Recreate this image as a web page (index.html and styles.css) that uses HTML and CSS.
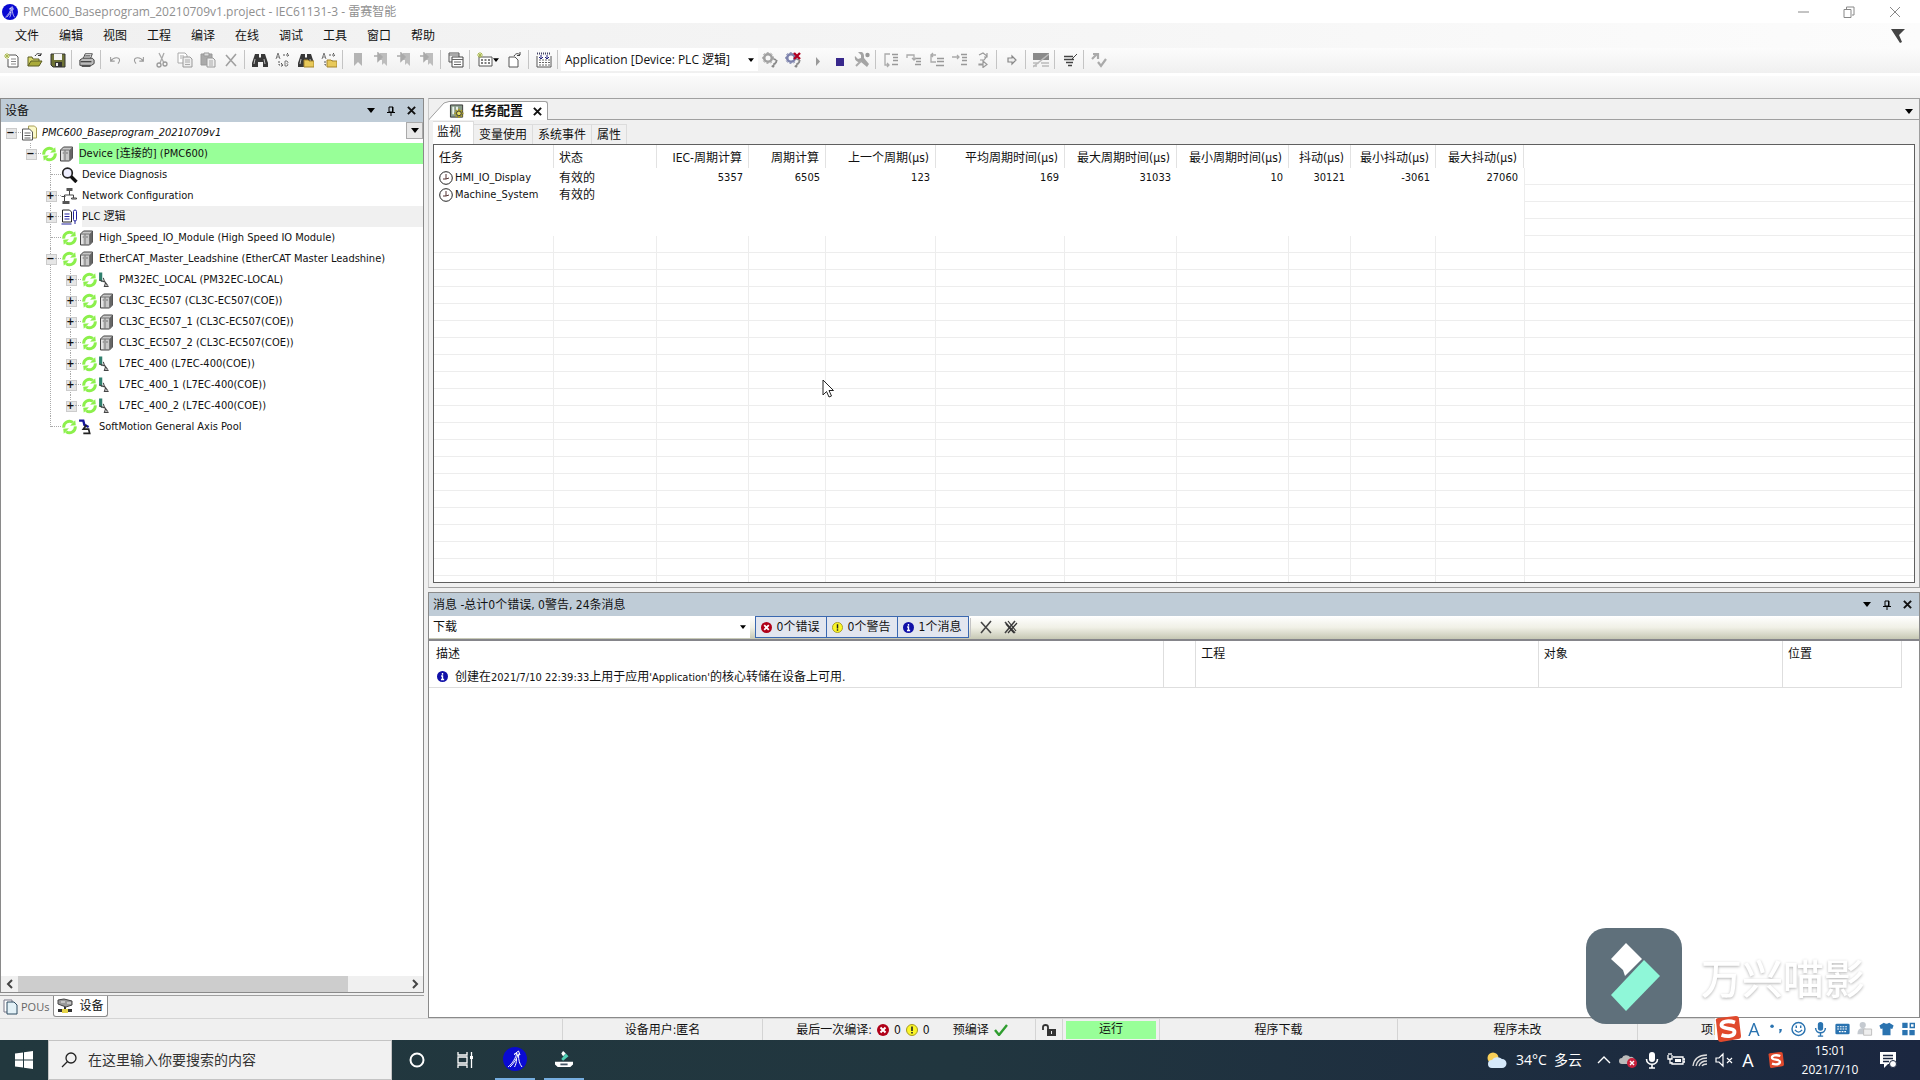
FILE: index.html
```html
<!DOCTYPE html>
<html lang="zh-CN">
<head>
  <meta charset="utf-8">
  <title>PMC600_Baseprogram_20210709v1.project - IEC61131-3 - 雷赛智能</title>
  <link rel="stylesheet" href="styles.css">
</head>
<body>
  <!-- shared icons -->
  <svg class="sprite" aria-hidden="true">
    <symbol id="i-logo" viewBox="0 0 24 24"><circle cx="12" cy="12" r="12" fill="#0a0ad2"/><path d="M5 20C10 16 12.500 11 14 6l-3 1.500L15.500 4 17 8l-2-1c-1 5-4 9-8 13M15.500 8c0 5 1 9 3.500 12M13.500 12c0 4-1 6-2 8" fill="none" stroke="#fff" stroke-width="1"/></symbol>
    <symbol id="i-down" viewBox="0 0 8 5"><path d="M0 0h8L4 5z"/></symbol>
    <symbol id="i-pin" viewBox="0 0 10 12"><path d="M3 2h4v5H3zM6.500 2v5M1 7.500h8M5 8v3" fill="none" stroke="#000" stroke-width="1"/></symbol>
    <symbol id="i-x" viewBox="0 0 10 10"><path d="M1 1l8 8M9 1L1 9" fill="none" stroke="currentColor" stroke-width="2.200"/></symbol>
    <symbol id="i-err" viewBox="0 0 12 12"><circle cx="6" cy="6" r="6" fill="#b00018"/><path d="M3.500 3.500l5 5M8.500 3.500l-5 5" stroke="#fff" stroke-width="2"/></symbol>
    <symbol id="i-warn" viewBox="0 0 12 12"><circle cx="6" cy="6" r="5.500" fill="#fbf628" stroke="#a59a22"/><path d="M6 2.500v4.500M6 8v1.600" stroke="#222" stroke-width="1.600"/></symbol>
    <symbol id="i-info" viewBox="0 0 12 12"><circle cx="6" cy="6" r="6" fill="#1010a8"/><path d="M6 2.200v1.800M4.500 5.500H6v3.700M4.300 9.300h3.500" fill="none" stroke="#fff" stroke-width="1.500"/></symbol>
    <symbol id="i-sync" viewBox="0 0 14 14"><path d="M2 7.500A5 5 0 0 1 10 3M12 6.500A5 5 0 0 1 4 11" fill="none" stroke="#8cf04c" stroke-width="2.600"/><path d="M7.500 6l5-.5L12 1zM6.500 8l-5 .5L2 13z" fill="#8cf04c"/></symbol>
    <symbol id="i-dev" viewBox="0 0 14 16"><path d="M1 4l3-3h9v11l-3 3H1z" fill="#c8c8c8" stroke="#444"/><path d="M10 4l3-3v11l-3 3z" fill="#666"/><path d="M1 4h9v11M5.500 4v11M2.500 7h2M6.500 7h2" fill="none" stroke="#777"/><path d="M2 5h1v9H2z" fill="#fff"/></symbol>
    <symbol id="i-drive" viewBox="0 0 16 14"><path d="M1 0h3v9l-3-2z" fill="#2f7f6d"/><path d="M1 7l6 2M5 5l1 3 3 4M7 10l-1 3h4" fill="none" stroke="#444"/></symbol>
    <symbol id="i-axis" viewBox="0 0 16 14"><path d="M1 1h4l1 4 4 2" fill="none" stroke="#15159a" stroke-width="2.200"/><path d="M8 5L5 9h5l1 4H5" fill="none" stroke="#222" stroke-width="1.600"/></symbol>
    <symbol id="i-diag" viewBox="0 0 16 16"><circle cx="6" cy="6" r="4.800" fill="#eef" stroke="#222" stroke-width="1.700"/><path d="M9.500 9.500l5.500 5.500" stroke="#111" stroke-width="3.400"/></symbol>
    <symbol id="i-net" viewBox="0 0 16 16"><path d="M5 0h6v3H5zM1 13h7v3H1z" fill="#555"/><path d="M8 3v4M3 13V7h9v3M0 8.500h4M10 10h5v1h-5z" fill="none" stroke="#444"/></symbol>
    <symbol id="i-plc" viewBox="0 0 16 16"><path d="M1 1h7l2 2v10H1z" fill="#fff" stroke="#222"/><path d="M3 5h5M3 7.500h5M3 10h5M0 15h10" stroke="#22229c" stroke-width="1.200"/><rect x="12" y="1" width="3" height="11" rx="1.500" fill="#fff" stroke="#22229c"/><path d="M13.500 12v3" stroke="#22229c"/></symbol>
    <symbol id="i-proj" viewBox="0 0 16 16"><path d="M7 1h6l2 2v10H7z" fill="#fbf9c8" stroke="#a89f58"/><path d="M1 4h7l3 3v8H1z" fill="#fff" stroke="#555"/><path d="M3 8h6M3 10.500h6M3 13h6" stroke="#666"/></symbol>
    <symbol id="i-clock" viewBox="0 0 14 14"><circle cx="7" cy="7" r="6.300" fill="#fff" stroke="#222"/><path d="M7 3v5M7 8l3-1M4 8h3" fill="none" stroke="#533"/></symbol>
    <symbol id="i-new" viewBox="0 0 16 16"><path d="M5 3h7l2 2v10H4V7" fill="#fff" stroke="#555"/><path d="M7 7h5M7 9.500h5M7 12h5" stroke="#888"/><path d="M0 4h6M3 1v6M1 2l4 4M5 2L1 6" stroke="#a9b84c"/></symbol>
    <symbol id="i-open" viewBox="0 0 16 16"><path d="M1 14V5h4l1 2h6v2" fill="#d8d86a" stroke="#5a5c22"/><path d="M1 14l3-5h11l-3 5z" fill="#a9aa3a" stroke="#5a5c22"/><path d="M8 4c2-3 4-3 6-1V1M14 3.500h-3" fill="none" stroke="#333"/></symbol>
    <symbol id="i-save" viewBox="0 0 16 16"><path d="M1 2h14v13H3l-2-2z" fill="#6e7236" stroke="#333"/><path d="M4 2h8v6H4z" fill="#f4f4f4"/><path d="M5 10h7v5H5z" fill="#333"/><path d="M6 11h2v3H6z" fill="#eee"/></symbol>
    <symbol id="i-print" viewBox="0 0 18 16"><path d="M5 6l2-5h8l-2 5" fill="#fff" stroke="#333"/><path d="M7 3h6M6.500 4.500h6" stroke="#666"/><path d="M1 8l3-2h11l2 2v4l-3 2H1z" fill="#bbb" stroke="#333"/><path d="M2 10h12M3 15h10" stroke="#222" stroke-width="1.200"/></symbol>
    <symbol id="i-undo" viewBox="0 0 16 16"><path d="M2 5v5h5M2 10c4-6 11-5 11-1 0 2-1 3-2 4" fill="none" stroke="#999" stroke-width="1.300"/></symbol>
    <symbol id="i-cut" viewBox="0 0 16 16"><path d="M5 1l5 10M10 1L6 11" stroke="#aaa" stroke-width="1.300"/><circle cx="5" cy="13" r="2" fill="none" stroke="#999" stroke-width="1.300"/><circle cx="11" cy="12" r="2" fill="none" stroke="#999" stroke-width="1.300"/></symbol>
    <symbol id="i-copy" viewBox="0 0 16 16"><path d="M1 1h7l2 2v8H1z" fill="#fff" stroke="#aaa"/><path d="M6 5h7l2 2v8H6z" fill="#eee" stroke="#999"/><path d="M3 4h4M3 6h2M8 8h5M8 10h5M8 12.500h5" stroke="#aaa"/></symbol>
    <symbol id="i-paste" viewBox="0 0 16 16"><path d="M1 2h11v11H1z" fill="#aaa" stroke="#999"/><path d="M4 1h5v3H4z" fill="#ddd" stroke="#999"/><path d="M7 6h6l2 2v7H7z" fill="#eee" stroke="#999"/><path d="M9 9h4M9 11h4M9 13h4" stroke="#aaa"/></symbol>
    <symbol id="i-del" viewBox="0 0 16 16"><path d="M3 3l10 11M13 2L3 14" stroke="currentColor" stroke-width="1.600"/></symbol>
    <symbol id="i-find" viewBox="0 0 16 16"><path d="M3 2h4v3l1 1 1-1V2h4l3 9v4h-5v-5H6v5H0v-4z" fill="#383838"/><path d="M3 7l-1 5M12 7l1 5" stroke="#bbb"/></symbol>
    <symbol id="i-repl" viewBox="0 0 16 16"><path d="M1 7l2-6 2 6M2 5h2M10 9v5h2q2-1 0-2.500 2-1 0-2.500z" fill="none" stroke="#777"/><path d="M8 3h6M12 1l2 2-2 2M4 9v4h4M6 11l2 2-2 2" fill="none" stroke="#555" stroke-dasharray="2 1"/></symbol>
    <symbol id="i-fold" viewBox="0 0 16 16"><path d="M6 8h4l1 1h5v6H6z" fill="#e8c95a" stroke="#a5852c"/></symbol>
    <symbol id="i-mark" viewBox="0 0 16 16"><path d="M4 1h8v13l-4-4-4 4z" fill="#b4b4b4"/></symbol>
    <symbol id="i-markn" viewBox="0 0 16 16"><path d="M7 1h7v13l-3-3-2 2V8H7z" fill="#bdbdbd"/><path d="M1 4h6M5 1l4 4-4 4z" fill="#aaa" stroke="#aaa" stroke-width="1.500"/></symbol>
    <symbol id="i-wins" viewBox="0 0 16 16"><path d="M1 1h10v9H1z" fill="#eee" stroke="#555"/><path d="M4 5h11v10H4z" fill="#fff" stroke="#444"/><path d="M1 3h10M4 7.500h11M6 10h7M6 12.500h7" stroke="#666"/></symbol>
    <symbol id="i-grid" viewBox="0 0 16 16"><path d="M2 5h13v9H2z" fill="#fff" stroke="#555"/><path d="M4 8h9M4 11h9" stroke="#555" stroke-width="1.500" stroke-dasharray="2 1.500"/><path d="M0 3h6M3 0v6M1 1l4 4M5 1L1 5" stroke="#a9b84c"/></symbol>
    <symbol id="i-page" viewBox="0 0 16 16"><path d="M2 5h6l3 3v7H2z" fill="#fff" stroke="#555"/><path d="M7 4c2-3 4-3 6-1V0M13 3.500h-3" fill="none" stroke="#444"/></symbol>
    <symbol id="i-build" viewBox="0 0 16 16"><path d="M1 4v11h14V4" fill="#fff" stroke="#555"/><path d="M3 8h11M3 10.500h11M3 13h11" stroke="#666" stroke-dasharray="2 1"/><path d="M1 1.500h14" stroke="#446" stroke-width="2" stroke-dasharray="1 1"/><path d="M5 3v4M3 5l2 2 2-2M11 3v4M9 5l2 2 2-2" fill="none" stroke="#22227c"/></symbol>
    <symbol id="i-gear" viewBox="0 0 16 16"><circle cx="6" cy="6" r="3.800" fill="none" stroke="currentColor" stroke-width="2.600"/><circle cx="6" cy="6" r="5.500" fill="none" stroke="currentColor" stroke-dasharray="2 2"/><path d="M12 7c3 1 3 4 0 5l-2 3M15 8l-4 7" fill="none" stroke="#888" stroke-width="1.800" stroke-dasharray="2 1"/></symbol>
    <symbol id="i-wrench" viewBox="0 0 16 16"><path d="M1 4l3 3 3-1V3L4 0c4-1 6 1 6 4v2l5 6-2 3-6-5C3 11 0 8 1 4z" fill="#a4a4a4"/><path d="M7 9l-5 5" stroke="#aaa" stroke-width="2"/><circle cx="13.500" cy="3" r="2.200" fill="#999"/></symbol>
    <symbol id="i-step" viewBox="0 0 16 16"><path d="M9 2.500h6M10 5.500h5M10 8.500h5M9 12.500h6" stroke="#999" stroke-width="1.400"/><path d="M7 2H2v11h4M4 11l2 2-2 2" fill="none" stroke="#aaa" stroke-width="1.300"/></symbol>
    <symbol id="i-over" viewBox="0 0 16 16"><path d="M9 6.500h6M10 9.500h5M9 12.500h6" stroke="#999" stroke-width="1.400"/><path d="M1 6V3h7v5M6 6l2 2 2-2" fill="none" stroke="#aaa" stroke-width="1.300"/></symbol>
    <symbol id="i-out" viewBox="0 0 16 16"><path d="M8 6.500h7M8 9.500h7M7 13.500h8" stroke="#999" stroke-width="1.400"/><path d="M7 10H2V3h5M4 1L2 3l2 2" fill="none" stroke="#aaa" stroke-width="1.300"/></symbol>
    <symbol id="i-to" viewBox="0 0 16 16"><path d="M9 2.500h6M10 5.500h5M10 8.500h5M9 12.500h6" stroke="#999" stroke-width="1.400"/><path d="M0 5h7M5 3l2 2-2 2" fill="none" stroke="#aaa" stroke-width="1.300"/></symbol>
    <symbol id="i-loop" viewBox="0 0 16 16"><path d="M4 3l4-2 4 3-3 4H5M12 1v4H9M4 12h4v-3l4 3.500-4 3V13H4z" fill="none" stroke="#999" stroke-width="1.200"/></symbol>
    <symbol id="i-next" viewBox="0 0 16 16"><path d="M4 6h4V4l4 4-4 4v-2H4z" fill="#eee" stroke="#888" stroke-width="1.200"/></symbol>
    <symbol id="i-flow" viewBox="0 0 16 16"><path d="M0 1h16v7H0z" fill="#8a8a8a"/><path d="M0 15L16 2M0 11h6M8 11h8M9 14h7M0 14h4" stroke="#bbb" stroke-width="1.500"/></symbol>
    <symbol id="i-force" viewBox="0 0 16 16"><path d="M2 4.500h9M2 7.500h10M4 10.500h7M6 13.500h4" stroke="#444" stroke-width="1.400"/><path d="M10 7l5-5" stroke="#444"/></symbol>
    <symbol id="i-tick" viewBox="0 0 16 16"><path d="M1 7l5-5M2 2h5v5" fill="none" stroke="#aaa" stroke-width="2.200"/><path d="M7 10l3 4 5-7" fill="none" stroke="#aaa" stroke-width="2.200"/></symbol>
    <symbol id="i-task" viewBox="0 0 16 16"><path d="M1 1h13v13H1z" fill="#8a9d8a" stroke="#333"/><path d="M3 3h2v8H3zM7 3h2v4H7z" fill="#eef4ee"/><path d="M10 5v10M5 10h10M6.500 6.500l7 7M13.500 6.500l-7 7" stroke="#a89c2c" stroke-width="2"/><circle cx="10" cy="10" r="2.500" fill="#e5dc60" stroke="#333"/></symbol>
    <symbol id="i-s" viewBox="0 0 26 26"><path d="M1 5Q0 3 3 2l18-2q3 0 3 3l2 17q0 3-3 3L6 26q-3 0-3-3z" fill="#e0492c"/><path d="M20 6.500C13 4 6 5.500 6.500 9.500s13 2 13 6.500-7 5-13 3" fill="none" stroke="#fff" stroke-width="3.800"/></symbol>
    <symbol id="i-mic" viewBox="0 0 14 18"><rect x="4" y="1" width="6" height="10" rx="3" fill="currentColor"/><path d="M1.500 8c0 7 11 7 11 0M7 13v4M4 17h6" fill="none" stroke="currentColor" stroke-width="1.600"/></symbol>
  </svg>

  <header class="titlebar">
    <svg class="app-logo"><use href="#i-logo"/></svg>
    <h1>PMC600_Baseprogram_20210709v1.project - IEC61131-3 - 雷赛智能</h1>
    <button aria-label="最小化"><svg viewBox="0 0 12 12"><path d="M1 6h11"/></svg></button>
    <button aria-label="还原"><svg viewBox="0 0 12 12"><path d="M1 3.500h7v8H1zM3.500 3V1h7.500v8H9"/></svg></button>
    <button aria-label="关闭"><svg viewBox="0 0 12 12"><path d="M1 1l10 10M11 1L1 11"/></svg></button>
  </header>

  <nav class="menubar">
    <button>文件</button><button>编辑</button><button>视图</button><button>工程</button><button>编译</button><button>在线</button><button>调试</button><button>工具</button><button>窗口</button><button>帮助</button>
    <button class="filter" aria-label="过滤"><svg viewBox="0 0 14 14"><path d="M0 0h14L8 6l3 7-2 1z" fill="#444"/></svg></button>
  </nav>

  <div class="toolbar">
    <button aria-label="新建"><svg><use href="#i-new"/></svg></button>
    <button aria-label="打开"><svg><use href="#i-open"/></svg></button>
    <button aria-label="保存"><svg><use href="#i-save"/></svg></button>
    <span class="sep"></span>
    <button aria-label="打印"><svg><use href="#i-print"/></svg></button>
    <span class="sep"></span>
    <button aria-label="撤销"><svg class="small"><use href="#i-undo"/></svg></button>
    <button aria-label="重做"><svg class="small mirror"><use href="#i-undo"/></svg></button>
    <button aria-label="剪切"><svg><use href="#i-cut"/></svg></button>
    <button aria-label="复制"><svg><use href="#i-copy"/></svg></button>
    <button aria-label="粘贴"><svg><use href="#i-paste"/></svg></button>
    <button class="dim" aria-label="删除"><svg><use href="#i-del"/></svg></button>
    <span class="sep"></span>
    <button aria-label="查找"><svg><use href="#i-find"/></svg></button>
    <button aria-label="替换"><svg><use href="#i-repl"/></svg></button>
    <button aria-label="在工程中查找"><svg><use href="#i-find"/><use href="#i-fold"/></svg></button>
    <button aria-label="在工程中替换"><svg><use href="#i-repl"/><use href="#i-fold"/></svg></button>
    <span class="sep"></span>
    <button aria-label="书签"><svg><use href="#i-mark"/></svg></button>
    <button aria-label="上一书签"><svg><use href="#i-markn"/></svg></button>
    <button aria-label="下一书签"><svg><use href="#i-markn"/></svg></button>
    <button aria-label="清除书签"><svg><use href="#i-markn"/></svg></button>
    <span class="sep"></span>
    <button aria-label="窗口"><svg><use href="#i-wins"/></svg></button>
    <span class="sep"></span>
    <button class="wide" aria-label="添加对象"><svg><use href="#i-grid"/></svg><svg class="caret"><use href="#i-down"/></svg></button>
    <button aria-label="新页"><svg><use href="#i-page"/></svg></button>
    <span class="sep"></span>
    <button aria-label="编译"><svg><use href="#i-build"/></svg></button>
    <span class="sep"></span>
    <span class="combo app-combo">
      <select aria-label="应用"><option>Application [Device: PLC 逻辑]</option></select>
      <svg class="caret"><use href="#i-down"/></svg>
    </span>
    <button class="dim" aria-label="登录"><svg><use href="#i-gear"/></svg></button>
    <button class="online" aria-label="退出"><svg viewBox="0 0 16 16"><use href="#i-gear"/><path d="M9 1l6 6M15 1L9 7" stroke="#b00020" stroke-width="2.400"/></svg></button>
    <button aria-label="启动"><svg viewBox="0 0 16 16"><path d="M8 5v9l4-4.500z" fill="#999"/></svg></button>
    <button aria-label="停止"><svg viewBox="0 0 16 16"><path d="M5 6h8v8H5z" fill="#38288c"/></svg></button>
    <button aria-label="设置"><svg><use href="#i-wrench"/></svg></button>
    <span class="sep"></span>
    <button aria-label="跳入"><svg><use href="#i-step"/></svg></button>
    <button aria-label="跳过"><svg><use href="#i-over"/></svg></button>
    <button aria-label="跳出"><svg><use href="#i-out"/></svg></button>
    <button aria-label="运行到光标"><svg><use href="#i-to"/></svg></button>
    <button aria-label="设置下一语句"><svg><use href="#i-loop"/></svg></button>
    <span class="sep"></span>
    <button aria-label="显示下一语句"><svg><use href="#i-next"/></svg></button>
    <span class="sep"></span>
    <button aria-label="流控制"><svg><use href="#i-flow"/></svg></button>
    <span class="sep"></span>
    <button aria-label="强制"><svg><use href="#i-force"/></svg></button>
    <span class="sep"></span>
    <button aria-label="检查"><svg><use href="#i-tick"/></svg></button>
  </div>
  <div class="toolbar-rest"></div>

  <main class="workspace">
    <aside class="side">
      <section class="panel tree-panel">
        <div class="panel-head">
          <h2>设备</h2>
          <button aria-label="菜单"><svg class="caret"><use href="#i-down"/></svg></button>
          <button aria-label="固定"><svg class="pin"><use href="#i-pin"/></svg></button>
          <button aria-label="关闭"><svg class="cross"><use href="#i-x"/></svg></button>
        </div>
        <div class="tree-body">
          <ul class="tree">
            <li>
              <div class="node"><button class="exp">−</button><svg><use href="#i-proj"/></svg><span class="label project">PMC600_Baseprogram_20210709v1</span><button class="drop" aria-label="选择"><svg class="caret"><use href="#i-down"/></svg></button></div>
              <ul>
                <li>
                  <div class="node"><button class="exp">−</button><svg><use href="#i-sync"/></svg><svg><use href="#i-dev"/></svg><span class="label running">Device [连接的] (PMC600)</span></div>
                  <ul>
                    <li><div class="node"><span class="exp-gap"></span><svg><use href="#i-diag"/></svg><span class="label">Device Diagnosis</span></div></li>
                    <li><div class="node"><button class="exp">+</button><svg><use href="#i-net"/></svg><span class="label">Network Configuration</span></div></li>
                    <li><div class="node"><button class="exp">+</button><svg><use href="#i-plc"/></svg><span class="label current">PLC 逻辑</span></div></li>
                    <li><div class="node"><span class="exp-gap"></span><svg><use href="#i-sync"/></svg><svg><use href="#i-dev"/></svg><span class="label">High_Speed_IO_Module (High Speed IO Module)</span></div></li>
                    <li>
                      <div class="node"><button class="exp">−</button><svg><use href="#i-sync"/></svg><svg><use href="#i-dev"/></svg><span class="label">EtherCAT_Master_Leadshine (EtherCAT Master Leadshine)</span></div>
                      <ul>
                        <li><div class="node"><button class="exp">+</button><svg><use href="#i-sync"/></svg><svg><use href="#i-drive"/></svg><span class="label">PM32EC_LOCAL (PM32EC-LOCAL)</span></div></li>
                        <li><div class="node"><button class="exp">+</button><svg><use href="#i-sync"/></svg><svg><use href="#i-dev"/></svg><span class="label">CL3C_EC507 (CL3C-EC507(COE))</span></div></li>
                        <li><div class="node"><button class="exp">+</button><svg><use href="#i-sync"/></svg><svg><use href="#i-dev"/></svg><span class="label">CL3C_EC507_1 (CL3C-EC507(COE))</span></div></li>
                        <li><div class="node"><button class="exp">+</button><svg><use href="#i-sync"/></svg><svg><use href="#i-dev"/></svg><span class="label">CL3C_EC507_2 (CL3C-EC507(COE))</span></div></li>
                        <li><div class="node"><button class="exp">+</button><svg><use href="#i-sync"/></svg><svg><use href="#i-drive"/></svg><span class="label">L7EC_400 (L7EC-400(COE))</span></div></li>
                        <li><div class="node"><button class="exp">+</button><svg><use href="#i-sync"/></svg><svg><use href="#i-drive"/></svg><span class="label">L7EC_400_1 (L7EC-400(COE))</span></div></li>
                        <li><div class="node"><button class="exp">+</button><svg><use href="#i-sync"/></svg><svg><use href="#i-drive"/></svg><span class="label">L7EC_400_2 (L7EC-400(COE))</span></div></li>
                      </ul>
                    </li>
                    <li><div class="node"><span class="exp-gap"></span><svg><use href="#i-sync"/></svg><svg><use href="#i-axis"/></svg><span class="label">SoftMotion General Axis Pool</span></div></li>
                  </ul>
                </li>
              </ul>
            </li>
          </ul>
        </div>
        <div class="hscroll">
          <button aria-label="向左"><svg viewBox="0 0 8 10"><path d="M6 1L2 5l4 4"/></svg></button>
          <div class="track"><div class="thumb"></div></div>
          <button aria-label="向右"><svg viewBox="0 0 8 10"><path d="M2 1l4 4-4 4"/></svg></button>
        </div>
      </section>
      <div class="side-tabs">
        <button><svg viewBox="0 0 16 16"><path d="M1 1h8v12H1z" fill="#fff" stroke="#778"/><path d="M4 3h7l3 3v9H4z" fill="#e3f1f7" stroke="#2c4a60"/></svg>POUs</button>
        <button class="active"><svg viewBox="0 0 16 16"><path d="M1 2l6-1 8 2v4l-6 2-8-3z" fill="#999" stroke="#444"/><path d="M4 4h4M10 5h4" stroke="#eee"/><path d="M8 9v3" stroke="#333" stroke-width="2"/><path d="M1 11h5v3H1zM10 11h5v3h-5z" fill="#333"/><path d="M5 11h6v4H5z" fill="#e6d44a"/></svg>设备</button>
      </div>
    </aside>

    <div class="content">
      <section class="editor">
        <div class="doc-tabs">
          <svg class="slant" viewBox="0 0 20 19"><path d="M0 19L15 2l5-1v18z" fill="#fff"/><path d="M0 18.500L15 2l5-1.500" fill="none" stroke="#a0a0a0"/></svg>
          <div class="doc-tab"><svg class="task-icon"><use href="#i-task"/></svg>任务配置<button aria-label="关闭标签"><svg class="cross"><use href="#i-x"/></svg></button></div>
          <button class="tab-list" aria-label="标签列表"><svg class="caret"><use href="#i-down"/></svg></button>
        </div>
        <div class="sub-tabs">
          <button class="active">监视</button><button>变量使用</button><button>系统事件</button><button>属性</button>
        </div>
        <div class="task-box">
          <table class="tasks">
            <colgroup>
              <col class="c1"><col class="c2"><col class="c3"><col class="c4"><col class="c5"><col class="c6"><col class="c7"><col class="c8"><col class="c9"><col class="c10"><col class="c11"><col>
            </colgroup>
            <thead>
              <tr><th>任务</th><th>状态</th><th>IEC-周期计算</th><th>周期计算</th><th>上一个周期(µs)</th><th>平均周期时间(µs)</th><th>最大周期时间(µs)</th><th>最小周期时间(µs)</th><th>抖动(µs)</th><th>最小抖动(µs)</th><th>最大抖动(µs)</th><th></th></tr>
            </thead>
            <tbody>
              <tr><td><svg><use href="#i-clock"/></svg>HMI_IO_Display</td><td>有效的</td><td>5357</td><td>6505</td><td>123</td><td>169</td><td>31033</td><td>10</td><td>30121</td><td>-3061</td><td>27060</td><td></td></tr>
              <tr><td><svg><use href="#i-clock"/></svg>Machine_System</td><td>有效的</td><td></td><td></td><td></td><td></td><td></td><td></td><td></td><td></td><td></td><td></td></tr>
              <tr><td></td><td></td><td></td><td></td><td></td><td></td><td></td><td></td><td></td><td></td><td></td><td></td></tr>
              <tr><td></td><td></td><td></td><td></td><td></td><td></td><td></td><td></td><td></td><td></td><td></td><td></td></tr>
              <tr class="rest"><td></td><td></td><td></td><td></td><td></td><td></td><td></td><td></td><td></td><td></td><td></td><td></td></tr>
            </tbody>
          </table>
        </div>
      </section>

      <section class="panel messages">
        <div class="panel-head">
          <h2>消息 -总计0个错误, 0警告, 24条消息</h2>
          <button aria-label="菜单"><svg class="caret"><use href="#i-down"/></svg></button>
          <button aria-label="固定"><svg class="pin"><use href="#i-pin"/></svg></button>
          <button aria-label="关闭"><svg class="cross"><use href="#i-x"/></svg></button>
        </div>
        <div class="msg-tools">
          <span class="combo msg-combo">
            <select aria-label="类别"><option>下载</option></select>
            <svg class="caret"><use href="#i-down"/></svg>
          </span>
          <button class="toggle"><svg><use href="#i-err"/></svg>0个错误</button>
          <button class="toggle"><svg><use href="#i-warn"/></svg>0个警告</button>
          <button class="toggle"><svg><use href="#i-info"/></svg>1个消息</button>
          <span class="sep"></span>
          <button class="clear" aria-label="清除"><svg><use href="#i-del"/></svg></button>
          <button class="clear" aria-label="全部清除"><svg viewBox="0 0 16 16"><use href="#i-del"/><path d="M6 2l8 10M15 4L6 14M4 5l8 9" stroke="#333" stroke-width="1.200"/></svg></button>
        </div>
        <table class="msgs">
          <colgroup><col class="m1"><col class="m2"><col class="m3"><col class="m4"><col class="m5"></colgroup>
          <thead><tr><th>描述</th><th></th><th>工程</th><th>对象</th><th>位置</th></tr></thead>
          <tbody><tr><td><svg><use href="#i-info"/></svg>创建在<span class="latin">2021/7/10 22:39:33</span>上用于应用<span class="latin">'Application'</span>的核心转储在设备上可用.</td><td></td><td></td><td></td><td></td></tr></tbody>
        </table>
      </section>
    </div>
  </main>

  <footer class="statusbar">
    <span></span>
    <span>设备用户:匿名</span>
    <span class="build">最后一次编译: <svg><use href="#i-err"/></svg>0<svg><use href="#i-warn"/></svg>0<b>预编译</b><svg class="ok" viewBox="0 0 14 12"><path d="M1 6l4 5 8-10" fill="none" stroke="#2f9d2f" stroke-width="2.400"/></svg></span>
    <span><svg class="lock" viewBox="0 0 14 12"><path d="M1 6V3q0-2 2.500-2T6 3v3" fill="none" stroke="#333" stroke-width="1.800"/><path d="M5 5h9v7H5z" fill="#333"/><path d="M9 7h1v3H9z" fill="#eee"/></svg></span>
    <span class="run"><i>运行</i></span>
    <span>程序下载</span>
    <span>程序未改</span>
    <span class="user">项目</span>
  </footer>

  <div class="taskbar">
    <button class="start" aria-label="开始"><svg viewBox="0 0 18 18"><path d="M0 2.500l8-1v7H0zM9 1.300L18 0v8.500H9zM0 9.500h8v7l-8-1zM9 9.500h9V18l-9-1.300z" fill="#fff"/></svg></button>
    <label class="search">
      <svg viewBox="0 0 16 16"><circle cx="10" cy="6" r="5"/><path d="M6.500 9.500L1 15"/></svg>
      <input type="text" placeholder="在这里输入你要搜索的内容">
    </label>
    <button aria-label="Cortana"><svg viewBox="0 0 18 18"><circle cx="9" cy="9" r="6.500" fill="none" stroke="#fff" stroke-width="2"/></svg></button>
    <button aria-label="任务视图"><svg viewBox="0 0 18 18"><path d="M1 1v3h9V1M1 17v-3h9v3M1 6h9v6H1zM14.500 1v16" fill="none" stroke="#fff" stroke-width="1.300"/><path d="M13 5h3v3h-3z" fill="#fff"/></svg></button>
    <button class="open" aria-label="雷赛智能"><svg class="big"><use href="#i-logo"/></svg></button>
    <button class="open" aria-label="万兴喵影"><svg viewBox="0 0 20 20"><path d="M9 1l3 3-3 3-2-3z" fill="#fff"/><path d="M12 4l3 3-6 5-2-2z" fill="#4fd0b5"/><path d="M0 13h20v3l-3 3H3l-3-3z" fill="#fff"/><path d="M6 15h8v2H6z" fill="#456"/></svg></button>
    <div class="tray">
      <button class="weather"><svg viewBox="0 0 20 16"><circle cx="6" cy="6" r="5.500" fill="#f8cf58"/><path d="M5 16a4 4 0 0 1 0-8 6 5 0 0 1 10-1 4.500 4.500 0 0 1 0 9z" fill="#d6e9fa"/></svg>34°C&nbsp; 多云</button>
      <button aria-label="更多"><svg viewBox="0 0 18 18"><path d="M3 12l6-6 6 6" fill="none" stroke="#fff" stroke-width="1.400"/></svg></button>
      <button aria-label="OneDrive"><svg viewBox="0 0 18 18"><path d="M3 13a3 3 0 0 1 0-6 4.500 4 0 0 1 8-1 4 4 0 0 1 5 4v3z" fill="#bbb"/><circle cx="13" cy="12" r="5" fill="#c8203c"/><path d="M11 10l4 4M15 10l-4 4" stroke="#fff" stroke-width="1.400"/></svg></button>
      <button aria-label="麦克风"><svg><use href="#i-mic"/></svg></button>
      <button aria-label="电源"><svg viewBox="0 0 18 18"><path d="M6 6h10v7H5v-2M16 8h2v3h-2M1 4v4h4V4M2 4V2M4 4V2M3 8v4h2" fill="none" stroke="#fff" stroke-width="1.300"/><path d="M8 8h6v3H8z" fill="#fff"/></svg></button>
      <button aria-label="网络"><svg viewBox="0 0 18 18"><path d="M2 15C3 8 8 4 16 4M5 15c1-5 4-8 11-8M8 15c1-3 3-5 8-5M11 15c1-2 2-2 5-2" fill="none" stroke="#ddd" stroke-width="1.300"/></svg></button>
      <button aria-label="静音"><svg viewBox="0 0 18 18"><path d="M1 7h3l4-4v12l-4-4H1zM12 7l5 5M17 7l-5 5" fill="none" stroke="#fff" stroke-width="1.200"/></svg></button>
      <button class="lang">A</button>
      <button class="sogou" aria-label="搜狗"><svg><use href="#i-s"/></svg></button>
      <button class="clock"><time>15:01</time><time>2021/7/10</time></button>
      <button class="notes" aria-label="通知"><svg viewBox="0 0 18 18"><path d="M1 1h16v12H9l-4 4v-4H1z" fill="#fff"/><path d="M4 4.500h10M4 7.500h10M4 10.500h6" stroke="#1c2840" stroke-width="1.300"/><circle cx="14" cy="13" r="3.500" fill="#fff" stroke="#1c2840"/></svg></button>
    </div>
  </div>

  <!-- input method bar -->
  <div class="ime">
    <svg class="ime-s"><use href="#i-s"/></svg>
    <button>A</button>
    <button aria-label="标点"><svg viewBox="0 0 18 18"><circle cx="4" cy="6" r="2" fill="#2a73b0"/><path d="M12 9h3q0 4-3 5 1-2 0-5" fill="#2a73b0"/></svg></button>
    <button aria-label="表情"><svg viewBox="0 0 18 18"><circle cx="9" cy="9" r="7.300" fill="none" stroke="#2a73b0" stroke-width="1.600"/><path d="M6.500 5v3M11.500 5v3M5 10q4 5 8 0" fill="none" stroke="#2a73b0" stroke-width="1.600"/></svg></button>
    <button aria-label="语音"><svg><use href="#i-mic"/></svg></button>
    <button aria-label="键盘"><svg viewBox="0 0 18 18"><rect x="1" y="3" width="16" height="12" rx="1.500" fill="#2a73b0"/><path d="M3 6.500h12M3 9h12M5 12h8" stroke="#fff" stroke-width="1.300" stroke-dasharray="2 1"/></svg></button>
    <button aria-label="账号"><svg viewBox="0 0 18 18"><circle cx="7" cy="4.500" r="3.500" fill="#c5cad0"/><path d="M1 15q0-7 6-7t6 7z" fill="#c5cad0"/><path d="M8 9h9v7H8z" fill="#eee" stroke="#bbb"/></svg></button>
    <button aria-label="皮肤"><svg viewBox="0 0 18 18"><path d="M6 2q3 2 6 0l5 3-1.500 4-2-.5V16h-9V8.500l-2 .5L1 5z" fill="#2a73b0"/></svg></button>
    <button aria-label="工具箱"><svg viewBox="0 0 18 18"><path d="M2 2h6v6H2zM2 10h6v6H2zM10 10h6v6h-6z" fill="#2a73b0"/><path d="M11 2.800h4.500v4.500H11z" fill="none" stroke="#2a73b0" stroke-width="1.600"/></svg></button>
  </div>

  <!-- recorder watermark -->
  <div class="watermark">
    <svg viewBox="0 0 96 96"><rect width="96" height="96" rx="20" fill="#5f707b"/><path d="M40 15l16 16-17 17-2-6-12-11z" fill="#fff"/><path d="M58 32l16 16-34 35-15-16z" fill="#8ff7d8"/></svg>
    <span>万兴喵影</span>
  </div>

  <svg class="pointer" viewBox="0 0 12 19"><path d="M1 1v15l3.500-3.500L7 18l2.500-1L7 11.500h4.500z" fill="#fff" stroke="#222"/></svg>
</body>
</html>
```
FILE: styles.css
```css
* {
  box-sizing: border-box;
}

body {
  margin: 0;
  height: 100vh;
  display: flex;
  flex-direction: column;
  overflow: hidden;
  background: #f0f0f0;
  color: #111;
  font-family: "DejaVu Sans Condensed", "Liberation Sans", "Noto Sans CJK SC", sans-serif;
  font-size: 11px;
  line-height: 16px;
}

button,
select,
input {
  font: inherit;
  color: inherit;
  margin: 0;
  padding: 0;
  border: 0;
  background: none;
}

button {
  display: flex;
  align-items: center;
  justify-content: center;
  flex: none;
}

svg {
  flex: none;
}

h1,
h2 {
  margin: 0;
  font-weight: normal;
}

ul {
  margin: 0;
  padding: 0;
  list-style: none;
}

.sprite {
  position: absolute;
  width: 0;
  height: 0;
}

.caret {
  width: 8px;
  height: 5px;
}

.pin {
  width: 10px;
  height: 12px;
}

.cross {
  width: 9px;
  height: 9px;
}

/* title, menu, toolbar */
.titlebar {
  display: flex;
  align-items: center;
  height: 23px;
  padding-right: 2px;
  background: #fff;
  font-family: "Open Sans", "Noto Sans CJK SC", sans-serif;
  color: #8f8f8f;
}

.app-logo {
  width: 16px;
  height: 16px;
  margin: 0 5px 0 2px;
}

.titlebar h1 {
  flex: 1;
  font-size: 12px;
}

.titlebar button {
  width: 46px;
  height: 20px;
}

.titlebar button svg {
  width: 12px;
  height: 12px;
  fill: none;
  stroke: #888;
}

.menubar {
  display: flex;
  height: 25px;
  padding-left: 5px;
  background: linear-gradient(90deg, #f0f0f0, #f5f5f5 50%, #fcfcfc);
  font-family: "Open Sans", "Noto Sans CJK SC", sans-serif;
  font-size: 12px;
}

.menubar button {
  width: 44px;
}

.menubar .filter {
  margin-left: auto;
}

.filter svg {
  width: 14px;
  height: 14px;
}

.toolbar {
  display: flex;
  align-items: center;
  height: 25px;
  padding-bottom: 2px;
  background: linear-gradient(#fcfcfc, #f0f0f0);
}

.toolbar button {
  width: 23px;
  height: 23px;
}

.toolbar button.wide {
  width: 30px;
}

.toolbar button svg {
  width: 16px;
  height: 16px;
}

.toolbar button svg.caret {
  width: 6px;
  height: 4px;
}

.toolbar button svg.small {
  width: 13px;
  height: 13px;
}

.mirror {
  transform: scaleX(-1);
}

.dim {
  color: #a0a0a0;
}

.online {
  color: #7d83ad;
}

.sep {
  flex: none;
  width: 1px;
  height: 19px;
  margin: 0 3px 0 2px;
  background: #c4c4c4;
}

.combo {
  position: relative;
  display: flex;
  align-items: center;
}

.combo select {
  width: 100%;
  height: 100%;
  appearance: none;
}

.combo .caret {
  position: absolute;
  right: 4px;
  width: 6px;
  height: 4px;
}

.app-combo {
  width: 197px;
  height: 23px;
  background: #fff;
  font-family: "Open Sans", "Noto Sans CJK SC", sans-serif;
  font-size: 12px;
}

.app-combo select {
  padding-left: 4px;
}

.toolbar-rest {
  height: 25px;
  border-top: 3px solid #fff;
  background: linear-gradient(#fbfbfb, #f0f0f0);
}

/* workspace */
.workspace {
  flex: 1;
  min-height: 0;
  display: grid;
  grid-template-columns: 424px 1fr;
  gap: 4px;
}

.side {
  display: flex;
  flex-direction: column;
  min-height: 0;
}

.panel {
  border: 1px solid #8a8a8a;
  background: #fff;
  display: flex;
  flex-direction: column;
  min-height: 0;
}

.panel-head {
  display: flex;
  align-items: center;
  height: 23px;
  flex: none;
  padding: 0 2px 0 4px;
  background: #bfccd7;
}

.panel-head h2 {
  flex: 1;
  font-size: 12px;
}

.panel-head button {
  width: 20px;
  height: 20px;
}

.tree-panel {
  flex: 1;
}

.tree-body {
  flex: 1;
}

.tree ul {
  padding-left: 20px;
}

.tree li {
  position: relative;
}

/* dotted guides between siblings */
.tree ul > li::before {
  content: "";
  position: absolute;
  left: 9px;
  top: 0;
  bottom: 0;
  border-left: 1px dotted #aaa;
}

.tree ul > li:last-child::before {
  bottom: auto;
  height: 11px;
}

.node {
  display: flex;
  align-items: center;
  height: 21px;
}

.node svg {
  width: 17px;
  height: 16px;
}

.exp,
.exp-gap {
  position: relative;
  flex: none;
  width: 20px;
  height: 21px;
}

.exp {
  z-index: 1;
  font-size: 11px;
  font-weight: bold;
  line-height: 9px;
  padding-right: 1px;
}

.exp::before {
  content: "";
  position: absolute;
  left: 5px;
  top: 6px;
  width: 9px;
  height: 9px;
  background: #e6e6e6;
  border: 1px solid #ccc;
  z-index: -1;
}

.exp::after,
.exp-gap::after {
  content: "";
  position: absolute;
  left: 14px;
  right: 0;
  top: 10px;
  border-top: 1px dotted #aaa;
}

.exp-gap::after {
  left: 10px;
}

.node .label {
  flex: 1;
  margin-left: 4px;
  line-height: 21px;
  white-space: nowrap;
}

.label.project {
  font-style: italic;
}

.label.running {
  background: #98ff98;
}

.label.current {
  background: #f0f0f0;
}

.drop {
  align-self: flex-start;
  width: 17px;
  height: 17px;
  background: #e8e8e8;
  border: 1px solid #aaa;
}

.node .drop .caret {
  width: 8px;
  height: 5px;
}

.hscroll {
  display: flex;
  height: 16px;
  background: #f0f0f0;
}

.hscroll button {
  width: 17px;
}

.hscroll svg {
  width: 8px;
  height: 10px;
  fill: none;
  stroke: #444;
  stroke-width: 2px;
}

.track {
  flex: 1;
}

.thumb {
  width: 85%;
  height: 100%;
  background: #cdcdcd;
}

.side-tabs {
  display: flex;
  height: 22px;
  margin: 2px 0 1px;
  border-top: 1px solid #a0a0a0;
  font-size: 12px;
}

.side-tabs button {
  gap: 2px;
  padding: 0 4px 0 3px;
  color: #666;
  font-family: "Open Sans", "Noto Sans CJK SC", sans-serif;
  font-size: 11px;
}

.side-tabs svg {
  width: 16px;
  height: 16px;
}

.side-tabs .active {
  gap: 6px;
  color: #111;
  background: #fff;
  border: 1px solid #8a8a8a;
  border-top: 0;
  border-radius: 0 0 3px 3px;
  font-size: 12px;
}

.content {
  display: grid;
  grid-template-rows: 490fr 426fr;
  gap: 4px;
  min-width: 0;
  min-height: 0;
}

.editor {
  display: flex;
  flex-direction: column;
  min-height: 0;
  padding-right: 4px;
  padding-bottom: 4px;
  border: 1px solid #a0a0a0;
  border-left-color: #c8c8c8;
}

.doc-tabs {
  display: flex;
  align-items: flex-end;
  height: 21px;
  margin-right: -4px;
  box-shadow: inset 0 -1px #a0a0a0;
}

.slant {
  width: 20px;
  height: 19px;
}

.doc-tab {
  display: flex;
  align-items: center;
  gap: 6px;
  height: 19px;
  padding-right: 2px;
  background: #fff;
  border: solid #a0a0a0;
  border-width: 1px 1px 0 0;
  border-radius: 0 3px 0 0;
  font-size: 13px;
  font-weight: bold;
}

.doc-tab button {
  width: 15px;
  margin-left: 1px;
}

.task-icon {
  width: 16px;
  height: 15px;
}

.tab-list {
  margin-left: auto;
  width: 20px;
  height: 18px;
}

.sub-tabs {
  display: flex;
  align-items: flex-end;
  height: 24px;
  padding-left: 4px;
  font-size: 12px;
}

.sub-tabs button {
  height: 20px;
  padding: 0 5px;
  border: 1px solid #dcdcdc;
  border-width: 1px 1px 0 0;
}

.sub-tabs .active {
  height: 23px;
  padding: 0 12px 2px 4px;
  background: #fff;
}

.task-box {
  flex: 1;
  min-height: 0;
  margin-left: 4px;
  border: 1px solid #5f5f5f;
  background: #fff;
  overflow: hidden;
}

table {
  border-collapse: separate;
  border-spacing: 0;
  table-layout: fixed;
  width: 100%;
}

th,
td {
  padding: 0 5px;
  font-weight: normal;
  text-align: left;
  white-space: nowrap;
}

.tasks {
  height: 100%;
}

.c1 { width: 120px; }
.c2 { width: 103px; }
.c3 { width: 92px; }
.c4 { width: 77px; }
.c5 { width: 110px; }
.c6 { width: 129px; }
.c7 { width: 112px; }
.c8 { width: 112px; }
.c9 { width: 62px; }
.c10 { width: 85px; }
.c11 { width: 88px; }

.tasks th {
  height: 23px;
  padding-top: 2px;
  font-size: 12px;
  border-right: 1px solid #e2e2e2;
}

.tasks th:last-child {
  border-right: 0;
}

.tasks th:nth-child(n+3),
.tasks td:nth-child(n+3) {
  padding-right: 6px;
  text-align: right;
}

.tasks td {
  height: 17px;
  padding-top: 3px;
  line-height: 14px;
}

.tasks td:nth-child(2) {
  font-size: 12px;
}

.tasks td svg {
  width: 14px;
  height: 14px;
  margin-right: 2px;
  vertical-align: top;
}

.tasks td:last-child {
  border-left: 1px solid #ededed;
  border-bottom: 1px solid #ededed;
}

.tasks .rest td {
  height: auto;
  border-right: 1px solid #ededed;
  border-bottom: 0;
  background: repeating-linear-gradient(transparent 0 16px, #ededed 16px 17px);
}

.tasks .rest td:nth-last-child(-n+2) {
  border-right: 0;
}

/* messages */
.messages .panel-head {
  padding-right: 2px;
}

.msg-tools {
  display: flex;
  align-items: center;
  flex: none;
  height: 25px;
  padding-bottom: 1px;
  background: linear-gradient(#fff, #f0f0e6 50%, #c6c8b4);
  border-bottom: 2px solid #85858a;
}

.msg-combo {
  width: 321px;
  height: 22px;
  margin-right: 5px;
  background: #fff;
  font-size: 12px;
}

.msg-combo select {
  padding-left: 4px;
}

.toggle {
  width: 72px;
  height: 22px;
  gap: 5px;
  padding-right: 2px;
  margin-right: -1px;
  border: 1px solid #3a68b0;
  background: #e2e6ef;
  font-size: 12px;
}

.toggle svg {
  width: 11px;
  height: 11px;
}

.clear {
  width: 24px;
  color: #444;
}

.clear svg {
  width: 16px;
  height: 16px;
}

.msgs {
  width: calc(100% - 17px);
}

.m1 { width: 50%; }
.m2 { width: 32px; }
.m3 { width: 23.3%; }
.m4 { width: 16.6%; }
.m5 { width: 8.1%; }

.msgs th,
.msgs td {
  border-right: 1px solid #dedede;
  font-size: 12px;
}

.msgs th {
  height: 26px;
}

.msgs th:first-child,
.msgs td:first-child {
  padding-left: 7px;
}

.msgs td {
  height: 21px;
  border-bottom: 1px solid #dedede;
}

.msgs td svg {
  width: 11px;
  height: 11px;
  margin: 0 7px 0 1px;
  vertical-align: -1px;
}

.latin {
  font-size: 11px;
}

/* status bar */
.statusbar {
  display: grid;
  grid-template-columns: 563fr 200fr 273fr 27fr 97fr 238fr 240fr 282fr;
  height: 22px;
  flex: none;
  border-top: 1px solid #d4d4d4;
  font-size: 12px;
}

.statusbar > span {
  min-width: 0;
  display: flex;
  align-items: center;
  justify-content: center;
  border-right: 1px solid #d4d4d4;
}

.statusbar svg {
  width: 12px;
  height: 12px;
}

.statusbar .build {
  gap: 5px;
  padding-left: 6px;
}

.build b {
  margin-left: 18px;
  font-weight: normal;
}

.statusbar .ok,
.statusbar .lock {
  width: 14px;
}

.statusbar .run {
  padding: 1px 3px;
}

.run i {
  flex: 1;
  height: 18px;
  background: #98ff98;
  font-style: normal;
  text-align: center;
}

.statusbar .user {
  justify-content: flex-start;
  padding-left: 63px;
}

/* windows taskbar */
.taskbar {
  display: flex;
  height: 40px;
  flex: none;
  background: linear-gradient(90deg, #22383e, #21363f 50%, #1b2740);
  color: #fff;
  font-family: "Open Sans", "Noto Sans CJK SC", sans-serif;
}

.taskbar button {
  width: 49px;
}

.taskbar svg {
  width: 18px;
  height: 18px;
}

.taskbar .start {
  width: 48px;
}

.search {
  display: flex;
  align-items: center;
  width: 344px;
  padding-left: 12px;
  gap: 11px;
  background: #f1f1f1;
  border: 1px solid #c4c4c4;
}

.taskbar .search svg {
  width: 16px;
  height: 16px;
  fill: none;
  stroke: #222;
  stroke-width: 1.3px;
}

.search input {
  flex: 1;
  min-width: 0;
  font-size: 14px;
}

.search input::placeholder {
  color: #333;
  opacity: 1;
}

.taskbar .open {
  border-bottom: 2px solid #76aee0;
  width: 40px;
  margin: 0 4px 0 5px;
}

.taskbar .big {
  width: 24px;
  height: 24px;
}

.tray {
  display: flex;
  margin-left: auto;
}

.taskbar .tray button {
  width: 24px;
}

.taskbar .tray .weather {
  width: auto;
  gap: 9px;
  margin-right: 10px;
  font-size: 14px;
}

.taskbar .weather svg {
  width: 20px;
}

.tray .lang {
  font-size: 18px;
}

.taskbar .tray .sogou {
  width: 32px;
}

.taskbar .sogou svg {
  width: 16px;
  height: 16px;
}

.taskbar .tray .clock {
  flex-direction: column;
  width: 76px;
  font-size: 12px;
  line-height: 19px;
}

.taskbar .tray .notes {
  width: 39px;
  margin-right: 13px;
}

/* overlays */
.ime {
  position: fixed;
  right: 0;
  bottom: 40px;
  display: flex;
  align-items: center;
  height: 22px;
  padding: 0 1px 0 28px;
  background: #fff;
  color: #2a73b0;
}

.ime button {
  width: 22px;
  font-family: "Open Sans", sans-serif;
  font-size: 18px;
}

.ime button svg {
  width: 17px;
  height: 16px;
}

.ime-s {
  position: absolute;
  left: 0;
  width: 26px;
  height: 26px;
}

.watermark {
  position: fixed;
  right: 55px;
  bottom: 56px;
  display: flex;
  align-items: center;
  gap: 19px;
  color: #fff;
  font-family: "Noto Sans CJK SC", sans-serif;
  font-size: 41px;
  font-weight: 500;
  line-height: 48px;
  text-shadow: 0 1px 3px rgba(0, 0, 0, 0.3);
}

.watermark svg {
  width: 96px;
  height: 96px;
}

.pointer {
  position: fixed;
  left: 822px;
  top: 379px;
  width: 12px;
  height: 19px;
}
```
